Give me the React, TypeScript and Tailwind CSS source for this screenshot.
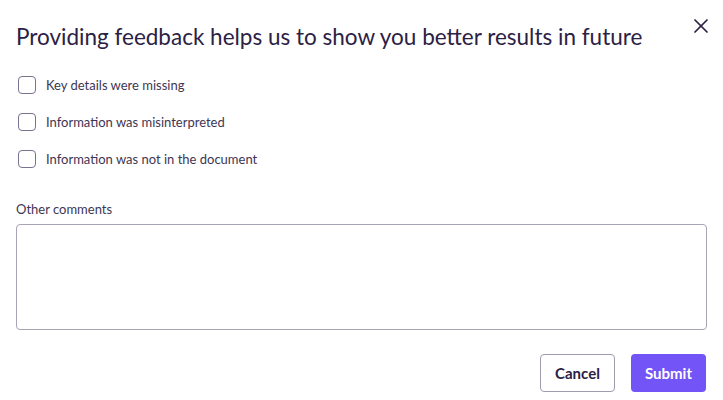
import { X } from 'lucide-react';

const options = [
  'Key details were missing',
  'Information was misinterpreted',
  'Information was not in the document',
];

export default function App() {
  return (
    <div className="w-[723px] h-[400px] bg-white font-['Lato',sans-serif] text-[#2b2144]">
      <div className="flex items-start justify-between pl-4 pr-[10px] pt-[22px]">
        <h1 className="text-[22.5px] leading-[30px] text-[#2b2144]">
          Providing feedback helps us to show you better results in future
        </h1>
        <button className="mt-[-8px] text-[#2b2144]">
          <X className="w-6 h-6" strokeWidth={1.75} />
        </button>
      </div>

      <div className="flex flex-col gap-[19px] mt-[24px] pl-[18px]">
        {options.map((label) => (
          <label key={label} className="flex items-center gap-[10px]">
            <span className="w-[18px] h-[18px] rounded-[4px] border-[1.5px] border-[#7b7190] bg-white" />
            <span className="text-[13px] leading-[18px] text-[#3e3653]">{label}</span>
          </label>
        ))}
      </div>

      <div className="mt-[32px] px-4">
        <div className="text-[13px] leading-[18px] text-[#3e3653] mb-[6px]">Other comments</div>
        <textarea className="block w-full h-[106px] resize-none rounded-[4px] border border-[#a9a3b5] outline-none" />
      </div>

      <div className="flex justify-end gap-4 mt-[24px] pr-[17px]">
        <button className="w-[75px] h-[38px] rounded-[4px] border border-[#a29bb0] bg-white text-[15px] font-bold text-[#2b2144]">
          Cancel
        </button>
        <button className="w-[75px] h-[38px] rounded-[4px] bg-[#7354f6] text-[15px] font-bold text-white">
          Submit
        </button>
      </div>
    </div>
  );
}
